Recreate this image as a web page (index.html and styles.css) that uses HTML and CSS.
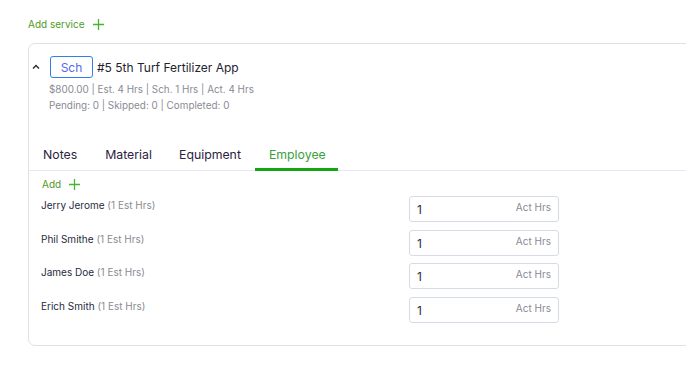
FILE: index.html
```html
<!DOCTYPE html>
<html lang="en">
<head>
<meta charset="UTF-8">
<meta name="viewport" content="width=device-width, initial-scale=1.0">
<title>Service</title>
<link rel="stylesheet" href="styles.css">
</head>
<body>
<div class="page">
<div class="add-link top-add">Add service <span class="plus"><svg width="11" height="11" viewBox="0 0 11 11"><path d="M5.5 0v11M0 5.5h11" stroke="#47b52d" stroke-width="1.3"/></svg></span></div>

<div class="card">
<div class="head">
<span class="chev"><svg width="8" height="6" viewBox="0 0 8 6"><path d="M1 4.5L4 1.5L7 4.5" fill="none" stroke="#2a2a3a" stroke-width="1.4"/></svg></span>
<span class="sch">Sch</span>
<span class="title">#5 5th Turf Fertilizer App</span>
</div>
<div class="meta first">$800.00 | Est. 4 Hrs | Sch. 1 Hrs | Act. 4 Hrs</div>
<div class="meta">Pending: 0 | Skipped: 0 | Completed: 0</div>

<div class="tabs">
<div class="tab">Notes</div>
<div class="tab">Material</div>
<div class="tab">Equipment</div>
<div class="tab active">Employee</div>
</div>

<div class="add-link inner-add">Add <span class="plus"><svg width="11" height="11" viewBox="0 0 11 11"><path d="M5.5 0v11M0 5.5h11" stroke="#47b52d" stroke-width="1.3"/></svg></span></div>

<div class="rows">
<div class="row">
<div class="name">Jerry Jerome <span class="est">(1 Est Hrs)</span></div>
<div class="hrs"><span class="val">1</span><span class="unit">Act Hrs</span></div>
</div>
<div class="row">
<div class="name">Phil Smithe <span class="est">(1 Est Hrs)</span></div>
<div class="hrs"><span class="val">1</span><span class="unit">Act Hrs</span></div>
</div>
<div class="row">
<div class="name">James Doe <span class="est">(1 Est Hrs)</span></div>
<div class="hrs"><span class="val">1</span><span class="unit">Act Hrs</span></div>
</div>
<div class="row">
<div class="name">Erich Smith <span class="est">(1 Est Hrs)</span></div>
<div class="hrs"><span class="val">1</span><span class="unit">Act Hrs</span></div>
</div>
</div>
</div>
</div>
</body>
</html>
```

FILE: styles.css
```css
body {
margin: 0;
font-family: Inter, "Noto Sans", sans-serif;
background-color: #ffffff;
color: #2a2a3c;
overflow: hidden;
}

.page {
padding: 17px 0 0 28px;
}

.add-link {
display: flex;
align-items: center;
gap: 8px;
color: #4f9a2a;
font-size: 10px;
}

.plus {
display: flex;
}

.top-add {
height: 14px;
}

.card {
margin-top: 12px;
margin-right: -20px;
border: 1px solid #dce1ea;
border-radius: 7px;
padding: 12px 0 14px 0;
}

.head {
display: flex;
align-items: center;
height: 22px;
}

.chev {
display: flex;
box-sizing: border-box;
width: 21px;
padding-left: 3px;
}

.sch {
box-sizing: border-box;
width: 43px;
height: 22px;
border: 1px solid #2f7ef0;
border-radius: 3px;
color: #5466f0;
font-size: 12px;
display: flex;
align-items: center;
justify-content: center;
}

.title {
margin-left: 4px;
font-size: 12px;
color: #23232f;
}

.meta {
margin-left: 20px;
font-size: 9.9px;
color: #8a8a94;
line-height: 16px;
}

.meta.first {
margin-top: 3px;
}

.tabs {
display: flex;
margin-top: 34px;
border-bottom: 1px solid #e5e7f4;
padding-left: 3px;
}

.tab {
font-size: 12.3px;
color: #2c2240;
padding: 0 11px 8px 11px;
margin-right: 6px;
line-height: 15px;
}

.tab:nth-child(2) {
margin-right: 5px;
}

.tab:nth-child(3) {
margin-right: 3px;
}

.tab.active {
color: #3aa23a;
border-bottom: 3px solid #12a612;
margin-bottom: -1px;
padding: 0 12px 6px 14px;
}

.inner-add {
margin: 6px 0 0 13px;
height: 14px;
}

.rows {
margin-top: 5px;
width: 530px;
}

.row {
display: flex;
justify-content: space-between;
align-items: flex-start;
height: 33.7px;
}

.name {
font-size: 10px;
color: #262a40;
margin-left: 12px;
margin-top: 3px;
}

.est {
color: #8a8a94;
}

.hrs {
box-sizing: border-box;
width: 150px;
height: 26px;
border: 1px solid #d6dbe6;
border-radius: 3px;
display: flex;
justify-content: space-between;
padding: 0 7px 0 7px;
}

.val {
font-size: 12px;
color: #2a2a3c;
margin-top: 5px;
}

.unit {
font-size: 10px;
color: #8a8a94;
margin-top: 4px;
}
```
